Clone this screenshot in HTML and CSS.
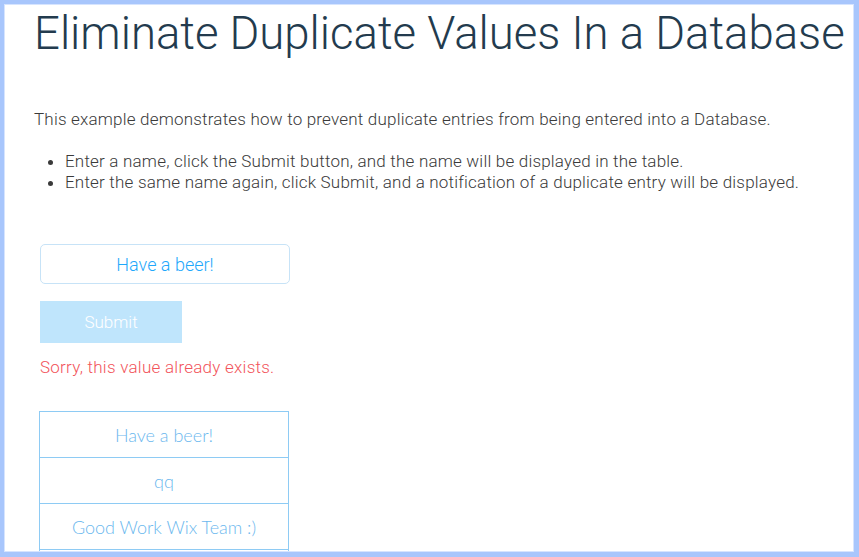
FILE: index.html
```html
<!DOCTYPE html>
<html lang="en">
<head>
  <meta charset="UTF-8">
  <title>Eliminate Duplicate Values</title>
  <link rel="stylesheet" href="styles.css">
</head>
<body>
  <div class="frame">
    <div class="page">
      <h1 class="title">Eliminate Duplicate Values In a Database</h1>

      <p class="intro">This example demonstrates how to prevent duplicate entries from being entered into a Database.</p>
      <ul class="steps">
        <li>Enter a name, click the Submit button, and the name will be displayed in the table.</li>
        <li>Enter the same name again, click Submit, and a notification of a duplicate entry will be displayed.</li>
      </ul>

      <div class="form">
        <input type="text" class="name-input" value="Have a beer!">
        <button class="submit" disabled>Submit</button>
        <div class="error">Sorry, this value already exists.</div>
      </div>

      <table class="names">
        <tr><td>Have a beer!</td></tr>
        <tr><td>qq</td></tr>
        <tr><td>Good Work Wix Team :)</td></tr>
        <tr><td></td></tr>
      </table>
    </div>
  </div>
</body>
</html>
```

FILE: styles.css
```css
html, body {
  margin: 0;
  height: 100%;
  overflow: hidden;
  background: #ffffff;
}

.frame {
  height: 557px;
  box-sizing: border-box;
  border: 4px solid #a8c6fc;
  border-right-width: 5px;
  border-bottom-width: 5px;
  overflow: hidden;
}

.page {
  height: 100%;
  box-sizing: border-box;
  border: 1px solid #d6e4fe;
  padding: 0 0 0 29px;
  overflow: hidden;
  font-family: Roboto, "Liberation Sans", Arial, sans-serif;
  font-weight: 300;
}

.title {
  margin: 3px 0 0 0;
  font-size: 45.5px;
  font-weight: 300;
  color: #233b4e;
  line-height: 52px;
}

.intro {
  margin: 49px 0 0 0;
  font-size: 17px;
  letter-spacing: 0.2px;
  color: #3a3a3a;
  line-height: 21px;
}

.steps {
  margin: 21px 0 0 0;
  padding-left: 31px;
  font-size: 17px;
  letter-spacing: 0.2px;
  color: #3a3a3a;
  line-height: 21px;
}

.form {
  display: flex;
  flex-direction: column;
  align-items: flex-start;
  margin: 51px 0 0 6px;
}

.name-input {
  width: 250px;
  height: 40px;
  box-sizing: border-box;
  border: 1px solid #c7e3f7;
  border-radius: 5px;
  text-align: center;
  font-family: inherit;
  font-weight: 300;
  font-size: 18px;
  color: #1fa8fb;
  outline: none;
}

.submit {
  margin-top: 17px;
  width: 142px;
  height: 42px;
  border: none;
  background: #bfe5fc;
  color: #ffffff;
  font-family: inherit;
  font-weight: 300;
  font-size: 17px;
}

.error {
  margin-top: 14px;
  font-size: 17px;
  letter-spacing: 0.25px;
  color: #f2545b;
  line-height: 20px;
}

.names {
  margin: 34px 0 0 5px;
  width: 250px;
  border-collapse: collapse;
}

.names td {
  height: 45px;
  border: 1px solid #8ecbf4;
  text-align: center;
  font-family: Lato, "Liberation Sans", sans-serif;
  font-weight: 300;
  font-size: 18px;
  color: #6cb8ee;
  padding: 0;
}
```
